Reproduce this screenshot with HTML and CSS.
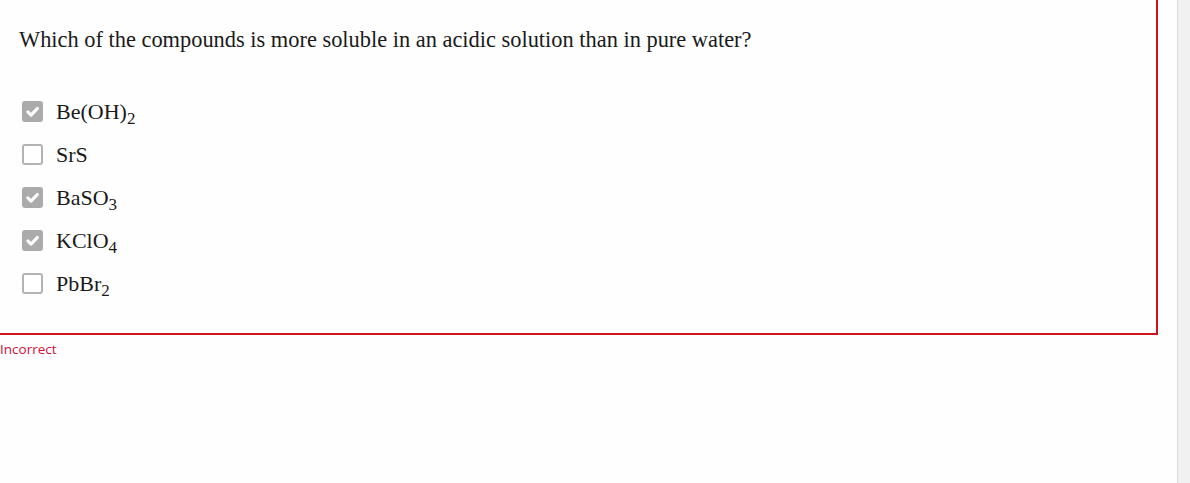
FILE: index.html
```html
<!DOCTYPE html>
<html lang="en">
<head>
  <meta charset="UTF-8" />
  <title>Question</title>
  <link rel="stylesheet" href="styles.css">
</head>
<body>
  <div class="page">
    <main class="content">
      <section class="question-box">
        <p class="prompt">Which of the compounds is more soluble in an acidic solution than in pure water?</p>
        <ul class="choices">
          <li class="choice checked"><span class="box"><svg viewBox="0 0 20 20"><path d="M4.5 10.5 L8.3 14.3 L15.8 6.3" /></svg></span><span class="label">Be(OH)<sub>2</sub></span></li>
          <li class="choice"><span class="box"></span><span class="label">SrS</span></li>
          <li class="choice checked"><span class="box"><svg viewBox="0 0 20 20"><path d="M4.5 10.5 L8.3 14.3 L15.8 6.3" /></svg></span><span class="label">BaSO<sub>3</sub></span></li>
          <li class="choice checked"><span class="box"><svg viewBox="0 0 20 20"><path d="M4.5 10.5 L8.3 14.3 L15.8 6.3" /></svg></span><span class="label">KClO<sub>4</sub></span></li>
          <li class="choice"><span class="box"></span><span class="label">PbBr<sub>2</sub></span></li>
        </ul>
      </section>
      <p class="feedback">Incorrect</p>
    </main>
    <div class="scrollbar"></div>
  </div>
</body>
</html>
```

FILE: styles.css
```css
html, body {
  margin: 0;
  height: 100%;
  overflow: hidden;
  background-color: #fff;
}

.page {
  display: flex;
  height: 100%;
}

.content {
  flex: 1;
  background-color: #fefefe;
}

.scrollbar {
  width: 12px;
  border-left: 1px solid #dcdcdc;
  background-color: #f1f1f1;
}

.question-box {
  width: 1160px;
  box-sizing: border-box;
  margin: -2px 0 0 -2px;
  border: 2px solid #d0121f;
  padding: 26px 0 28px 19px;
  font-family: "Liberation Serif", "Times New Roman", serif;
  color: #1a1a1a;
}

.prompt {
  margin: 0;
  font-size: 22.4px;
  line-height: 28px;
}

.choices {
  list-style: none;
  margin: 36px 0 0 0;
  padding: 0 0 0 3px;
}

.choice {
  display: flex;
  align-items: center;
  height: 43px;
}

.label {
  font-family: "Liberation Serif", "Times New Roman", serif;
  font-size: 22px;
  line-height: 26px;
}

.label sub {
  font-family: "Liberation Serif", "Times New Roman", serif;
  font-size: 17px;
  vertical-align: -5px;
  line-height: 0;
}

.box {
  width: 21px;
  height: 21px;
  box-sizing: border-box;
  border: 2px solid #b3b3b3;
  border-radius: 3px;
  margin-right: 13px;
  background-color: #fff;
  display: flex;
}

.checked .box {
  background-color: #ababab;
  border-color: #ababab;
}

.box svg {
  width: 100%;
  height: 100%;
  fill: none;
  stroke: #fff;
  stroke-width: 3.6;
  stroke-linecap: round;
  stroke-linejoin: round;
}

.feedback {
  margin: 5px 0 0 0;
  font-family: "Open Sans", sans-serif;
  font-size: 13.5px;
  color: #d0103a;
}
```
